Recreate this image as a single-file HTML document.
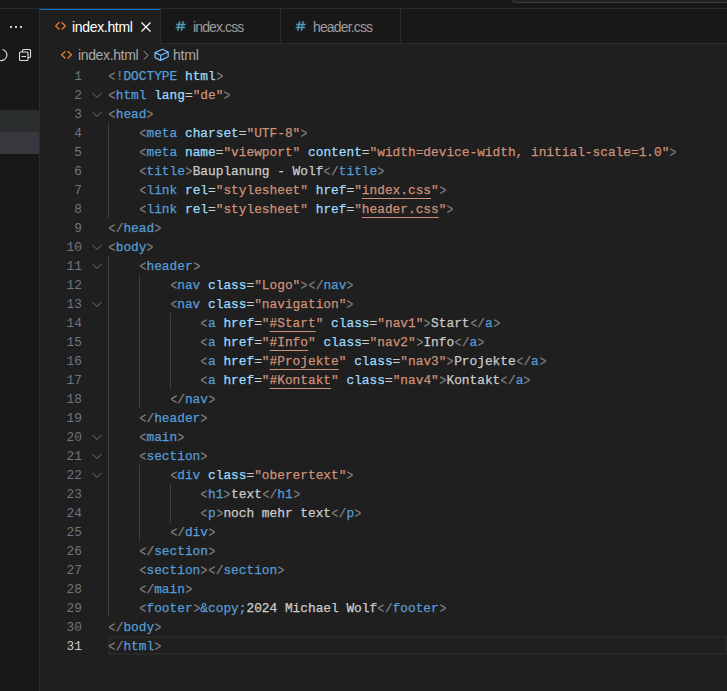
<!DOCTYPE html>
<html><head><meta charset="utf-8">
<style>
*{box-sizing:border-box}
html,body{margin:0;padding:0}
body{width:727px;height:691px;overflow:hidden;position:relative;background:#181818;font-family:"Liberation Sans",sans-serif}
.abs{position:absolute}
#title{left:0;top:0;width:727px;height:9px;background:#181818;border-bottom:1px solid #2b2b2b}
#cc{left:510px;top:-20px;width:260px;height:23px;border:1px solid #3c3c3c;border-radius:6px;background:#222222}
#side{left:0;top:9px;width:39px;height:682px;background:#181818}
#sideb{left:39px;top:9px;width:1px;height:682px;background:#2b2b2b}
#row1{left:0;top:110px;width:39px;height:22px;background:#2a2d2e}
#row2{left:0;top:132px;width:39px;height:22px;background:#37373d}
#editor{left:40px;top:44px;width:687px;height:647px;background:#1f1f1f}
#tabs{left:40px;top:9px;width:687px;height:35px;background:#181818;border-bottom:1px solid #2b2b2b}
.tab{position:absolute;top:0;height:35px;background:#181818;border-right:1px solid #2b2b2b;font-size:13px;color:#9d9d9d;border-bottom:1px solid #2b2b2b}
.tab.act{background:#1f1f1f;color:#fff;border-bottom:none;}
.tab .lbl{position:absolute;top:10px;white-space:nowrap;font-size:14px;letter-spacing:-0.33px}
.l{position:absolute;left:108px;height:19px;line-height:19px;font-family:"Liberation Mono",monospace;font-size:12.825px;white-space:pre;color:#cccccc;-webkit-text-stroke:0.25px currentColor}
.n,.n.cur{position:absolute;left:40px;width:42px;text-align:right;height:19px;line-height:19px;font-family:"Liberation Mono",monospace;font-size:12.825px;color:#6e7681}
.n.cur{color:#cccccc}
.p{color:#808080}.t{color:#569cd6}.a{color:#9cdcfe}.s{color:#ce9178}.e{color:#cccccc}.x{color:#cccccc}
.b{-webkit-text-stroke-width:0.1px;font-style:normal;display:inline-block;transform:scale(0.88,1.15);transform-origin:50% 5.1px}
.u{text-decoration:underline;text-underline-offset:4px;text-decoration-thickness:1px}
.f{position:absolute;left:89px}
.g{position:absolute;width:1px;background:#404040}
#curline{left:108px;top:636px;width:619px;height:19px;border:2px solid #282828}
#bc{left:40px;top:44px;height:22px;width:687px;font-size:13px;color:#a9a9a9}
</style></head><body>
<div id="title" class="abs"></div>
<div id="cc" class="abs"></div>
<div id="side" class="abs"></div>
<div id="row1" class="abs"></div>
<div id="row2" class="abs"></div>
<div id="sideb" class="abs"></div>
<!-- sidebar icons -->
<svg class="abs" style="left:0;top:0" width="40" height="70" viewBox="0 0 40 70">
<rect x="10" y="26" width="2" height="2" fill="#cccccc"/><rect x="15" y="26" width="2" height="2" fill="#cccccc"/><rect x="20" y="26" width="2" height="2" fill="#cccccc"/>
<path d="M2.5 49.5 A5.6 5.6 0 0 1 0 60.5" fill="none" stroke="#e0e0e0" stroke-width="1.1"/>
<rect x="19.5" y="52" width="8.5" height="8.5" rx="1" fill="none" stroke="#e0e0e0" stroke-width="1.1"/>
<path d="M22.5 52 V50.5 Q22.5 49.5 23.5 49.5 H29.5 Q30.5 49.5 30.5 50.5 V56.5 Q30.5 57.5 29.5 57.5 H28" fill="none" stroke="#e0e0e0" stroke-width="1.1"/>
<path d="M21.5 56.5 H26" stroke="#e0e0e0" stroke-width="1.1"/>
</svg>
<div id="tabs" class="abs">
  <div class="tab act" style="left:0;width:121px">
    <div class="abs" style="left:0;top:0;width:120px;height:1px;background:#0078d4"></div>
    <svg class="abs" style="left:14px;top:11px" width="14" height="12" viewBox="0 0 14 12"><path d="M5.4 2.3 L1.7 5.9 L5.4 9.5 M7.6 2.3 L11.3 5.9 L7.6 9.5" fill="none" stroke="#e37933" stroke-width="1.4"/></svg>
    <span class="lbl" style="left:32px">index.html</span>
    <svg class="abs" style="left:100px;top:12px" width="12" height="12" viewBox="0 0 12 12"><path d="M1.5 1.5 L10.5 10.5 M10.5 1.5 L1.5 10.5" fill="none" stroke="#ffffff" stroke-width="1.2"/></svg>
  </div>
  <div class="tab" style="left:121px;width:120px">
    <svg class="abs" style="left:11px;top:9px" width="18" height="16" viewBox="0 0 18 16"><path d="M7.6 3.2 L5.8 12.8 M11.2 3.2 L9.4 12.8 M4.2 6.5 H13.6 M3.7 9.5 H13" fill="none" stroke="#519aba" stroke-width="1.4"/></svg>
    <span class="lbl" style="left:32px;letter-spacing:-0.88px">index.css</span>
  </div>
  <div class="tab" style="left:241px;width:120px">
    <svg class="abs" style="left:11px;top:9px" width="18" height="16" viewBox="0 0 18 16"><path d="M7.6 3.2 L5.8 12.8 M11.2 3.2 L9.4 12.8 M4.2 6.5 H13.6 M3.7 9.5 H13" fill="none" stroke="#519aba" stroke-width="1.4"/></svg>
    <span class="lbl" style="left:32px;letter-spacing:-0.85px">header.css</span>
  </div>
</div>
<div id="editor" class="abs"></div>
<div id="bc" class="abs">
  <svg class="abs" style="left:20px;top:5px" width="14" height="12" viewBox="0 0 14 12"><path d="M5.4 2.2 L1.6 5.8 L5.4 9.4 M7.6 2.2 L11.4 5.8 L7.6 9.4" fill="none" stroke="#e37933" stroke-width="1.4"/></svg>
  <span class="abs" style="left:38px;top:3px;font-size:14px;letter-spacing:-0.36px">index.html</span>
  <svg class="abs" style="left:102px;top:5px" width="8" height="12" viewBox="0 0 8 12"><path d="M1.9 2.2 L6.1 6.4 L1.9 10.6" fill="none" stroke="#a9a9a9" stroke-width="1"/></svg>
  <svg class="abs" style="left:112px;top:2px" width="20" height="18" viewBox="0 0 20 18"><path d="M3 6.6 L10.4 3.3 L16.2 6.05 L16.2 10.7 L8.6 14.4 L3 11.6 Z M3 6.6 L8.7 9.3 L16.2 6.05 M8.7 9.3 L8.6 14.4" fill="none" stroke="#75beff" stroke-width="1.2" stroke-linejoin="round"/></svg>
  <span class="abs" style="left:133px;top:3px;font-size:14px;letter-spacing:-0.2px">html</span>
</div>
<div id="curline" class="abs"></div>
<div class="g" style="left:108px;top:123px;height:95px"></div><div class="g" style="left:108px;top:256px;height:361px"></div><div class="g" style="left:139px;top:275px;height:133px"></div><div class="g" style="left:139px;top:465px;height:76px"></div><div class="g" style="left:170px;top:313px;height:76px"></div><div class="g" style="left:170px;top:484px;height:38px"></div>
<div class="n" style="top:67px">1</div>
<div class="n" style="top:86px">2</div>
<div class="n" style="top:105px">3</div>
<div class="n" style="top:124px">4</div>
<div class="n" style="top:143px">5</div>
<div class="n" style="top:162px">6</div>
<div class="n" style="top:181px">7</div>
<div class="n" style="top:200px">8</div>
<div class="n" style="top:219px">9</div>
<div class="n" style="top:238px">10</div>
<div class="n" style="top:257px">11</div>
<div class="n" style="top:276px">12</div>
<div class="n" style="top:295px">13</div>
<div class="n" style="top:314px">14</div>
<div class="n" style="top:333px">15</div>
<div class="n" style="top:352px">16</div>
<div class="n" style="top:371px">17</div>
<div class="n" style="top:390px">18</div>
<div class="n" style="top:409px">19</div>
<div class="n" style="top:428px">20</div>
<div class="n" style="top:447px">21</div>
<div class="n" style="top:466px">22</div>
<div class="n" style="top:485px">23</div>
<div class="n" style="top:504px">24</div>
<div class="n" style="top:523px">25</div>
<div class="n" style="top:542px">26</div>
<div class="n" style="top:561px">27</div>
<div class="n" style="top:580px">28</div>
<div class="n" style="top:599px">29</div>
<div class="n" style="top:618px">30</div>
<div class="n cur" style="top:637px">31</div>
<svg class="f" style="top:85px" width="16" height="19" viewBox="0 0 16 19"><path d="M3.5 8 L8 12.5 L12.5 8" fill="none" stroke="#707070" stroke-width="1"/></svg><svg class="f" style="top:104px" width="16" height="19" viewBox="0 0 16 19"><path d="M3.5 8 L8 12.5 L12.5 8" fill="none" stroke="#707070" stroke-width="1"/></svg><svg class="f" style="top:237px" width="16" height="19" viewBox="0 0 16 19"><path d="M3.5 8 L8 12.5 L12.5 8" fill="none" stroke="#707070" stroke-width="1"/></svg><svg class="f" style="top:256px" width="16" height="19" viewBox="0 0 16 19"><path d="M3.5 8 L8 12.5 L12.5 8" fill="none" stroke="#707070" stroke-width="1"/></svg><svg class="f" style="top:294px" width="16" height="19" viewBox="0 0 16 19"><path d="M3.5 8 L8 12.5 L12.5 8" fill="none" stroke="#707070" stroke-width="1"/></svg><svg class="f" style="top:427px" width="16" height="19" viewBox="0 0 16 19"><path d="M3.5 8 L8 12.5 L12.5 8" fill="none" stroke="#707070" stroke-width="1"/></svg><svg class="f" style="top:446px" width="16" height="19" viewBox="0 0 16 19"><path d="M3.5 8 L8 12.5 L12.5 8" fill="none" stroke="#707070" stroke-width="1"/></svg><svg class="f" style="top:465px" width="16" height="19" viewBox="0 0 16 19"><path d="M3.5 8 L8 12.5 L12.5 8" fill="none" stroke="#707070" stroke-width="1"/></svg>
<div class="l" style="top:67px"><span class="p"><i class="b">&lt;</i>!</span><span class="t">DOCTYPE</span> <span class="a">html</span><span class="p"><i class="b">&gt;</i></span></div>
<div class="l" style="top:86px"><span class="p"><i class="b">&lt;</i></span><span class="t">html</span> <span class="a">lang</span><span class="e">=</span><span class="s">&quot;de&quot;</span><span class="p"><i class="b">&gt;</i></span></div>
<div class="l" style="top:105px"><span class="p"><i class="b">&lt;</i></span><span class="t">head</span><span class="p"><i class="b">&gt;</i></span></div>
<div class="l" style="top:124px">    <span class="p"><i class="b">&lt;</i></span><span class="t">meta</span> <span class="a">charset</span><span class="e">=</span><span class="s">&quot;UTF-8&quot;</span><span class="p"><i class="b">&gt;</i></span></div>
<div class="l" style="top:143px">    <span class="p"><i class="b">&lt;</i></span><span class="t">meta</span> <span class="a">name</span><span class="e">=</span><span class="s">&quot;viewport&quot;</span> <span class="a">content</span><span class="e">=</span><span class="s">&quot;width=device-width, initial-scale=1.0&quot;</span><span class="p"><i class="b">&gt;</i></span></div>
<div class="l" style="top:162px">    <span class="p"><i class="b">&lt;</i></span><span class="t">title</span><span class="p"><i class="b">&gt;</i></span><span class="x">Bauplanung - Wolf</span><span class="p"><i class="b">&lt;</i>/</span><span class="t">title</span><span class="p"><i class="b">&gt;</i></span></div>
<div class="l" style="top:181px">    <span class="p"><i class="b">&lt;</i></span><span class="t">link</span> <span class="a">rel</span><span class="e">=</span><span class="s">&quot;stylesheet&quot;</span> <span class="a">href</span><span class="e">=</span><span class="s">&quot;</span><span class="s u">index.css</span><span class="s">&quot;</span><span class="p"><i class="b">&gt;</i></span></div>
<div class="l" style="top:200px">    <span class="p"><i class="b">&lt;</i></span><span class="t">link</span> <span class="a">rel</span><span class="e">=</span><span class="s">&quot;stylesheet&quot;</span> <span class="a">href</span><span class="e">=</span><span class="s">&quot;</span><span class="s u">header.css</span><span class="s">&quot;</span><span class="p"><i class="b">&gt;</i></span></div>
<div class="l" style="top:219px"><span class="p"><i class="b">&lt;</i>/</span><span class="t">head</span><span class="p"><i class="b">&gt;</i></span></div>
<div class="l" style="top:238px"><span class="p"><i class="b">&lt;</i></span><span class="t">body</span><span class="p"><i class="b">&gt;</i></span></div>
<div class="l" style="top:257px">    <span class="p"><i class="b">&lt;</i></span><span class="t">header</span><span class="p"><i class="b">&gt;</i></span></div>
<div class="l" style="top:276px">        <span class="p"><i class="b">&lt;</i></span><span class="t">nav</span> <span class="a">class</span><span class="e">=</span><span class="s">&quot;Logo&quot;</span><span class="p"><i class="b">&gt;</i></span><span class="p"><i class="b">&lt;</i>/</span><span class="t">nav</span><span class="p"><i class="b">&gt;</i></span></div>
<div class="l" style="top:295px">        <span class="p"><i class="b">&lt;</i></span><span class="t">nav</span> <span class="a">class</span><span class="e">=</span><span class="s">&quot;navigation&quot;</span><span class="p"><i class="b">&gt;</i></span></div>
<div class="l" style="top:314px">            <span class="p"><i class="b">&lt;</i></span><span class="t">a</span> <span class="a">href</span><span class="e">=</span><span class="s">&quot;</span><span class="s u">#Start</span><span class="s">&quot;</span> <span class="a">class</span><span class="e">=</span><span class="s">&quot;nav1&quot;</span><span class="p"><i class="b">&gt;</i></span><span class="x">Start</span><span class="p"><i class="b">&lt;</i>/</span><span class="t">a</span><span class="p"><i class="b">&gt;</i></span></div>
<div class="l" style="top:333px">            <span class="p"><i class="b">&lt;</i></span><span class="t">a</span> <span class="a">href</span><span class="e">=</span><span class="s">&quot;</span><span class="s u">#Info</span><span class="s">&quot;</span> <span class="a">class</span><span class="e">=</span><span class="s">&quot;nav2&quot;</span><span class="p"><i class="b">&gt;</i></span><span class="x">Info</span><span class="p"><i class="b">&lt;</i>/</span><span class="t">a</span><span class="p"><i class="b">&gt;</i></span></div>
<div class="l" style="top:352px">            <span class="p"><i class="b">&lt;</i></span><span class="t">a</span> <span class="a">href</span><span class="e">=</span><span class="s">&quot;</span><span class="s u">#Projekte</span><span class="s">&quot;</span> <span class="a">class</span><span class="e">=</span><span class="s">&quot;nav3&quot;</span><span class="p"><i class="b">&gt;</i></span><span class="x">Projekte</span><span class="p"><i class="b">&lt;</i>/</span><span class="t">a</span><span class="p"><i class="b">&gt;</i></span></div>
<div class="l" style="top:371px">            <span class="p"><i class="b">&lt;</i></span><span class="t">a</span> <span class="a">href</span><span class="e">=</span><span class="s">&quot;</span><span class="s u">#Kontakt</span><span class="s">&quot;</span> <span class="a">class</span><span class="e">=</span><span class="s">&quot;nav4&quot;</span><span class="p"><i class="b">&gt;</i></span><span class="x">Kontakt</span><span class="p"><i class="b">&lt;</i>/</span><span class="t">a</span><span class="p"><i class="b">&gt;</i></span></div>
<div class="l" style="top:390px">        <span class="p"><i class="b">&lt;</i>/</span><span class="t">nav</span><span class="p"><i class="b">&gt;</i></span></div>
<div class="l" style="top:409px">    <span class="p"><i class="b">&lt;</i>/</span><span class="t">header</span><span class="p"><i class="b">&gt;</i></span></div>
<div class="l" style="top:428px">    <span class="p"><i class="b">&lt;</i></span><span class="t">main</span><span class="p"><i class="b">&gt;</i></span></div>
<div class="l" style="top:447px">    <span class="p"><i class="b">&lt;</i></span><span class="t">section</span><span class="p"><i class="b">&gt;</i></span></div>
<div class="l" style="top:466px">        <span class="p"><i class="b">&lt;</i></span><span class="t">div</span> <span class="a">class</span><span class="e">=</span><span class="s">&quot;oberertext&quot;</span><span class="p"><i class="b">&gt;</i></span></div>
<div class="l" style="top:485px">            <span class="p"><i class="b">&lt;</i></span><span class="t">h1</span><span class="p"><i class="b">&gt;</i></span><span class="x">text</span><span class="p"><i class="b">&lt;</i>/</span><span class="t">h1</span><span class="p"><i class="b">&gt;</i></span></div>
<div class="l" style="top:504px">            <span class="p"><i class="b">&lt;</i></span><span class="t">p</span><span class="p"><i class="b">&gt;</i></span><span class="x">noch mehr text</span><span class="p"><i class="b">&lt;</i>/</span><span class="t">p</span><span class="p"><i class="b">&gt;</i></span></div>
<div class="l" style="top:523px">        <span class="p"><i class="b">&lt;</i>/</span><span class="t">div</span><span class="p"><i class="b">&gt;</i></span></div>
<div class="l" style="top:542px">    <span class="p"><i class="b">&lt;</i>/</span><span class="t">section</span><span class="p"><i class="b">&gt;</i></span></div>
<div class="l" style="top:561px">    <span class="p"><i class="b">&lt;</i></span><span class="t">section</span><span class="p"><i class="b">&gt;</i></span><span class="p"><i class="b">&lt;</i>/</span><span class="t">section</span><span class="p"><i class="b">&gt;</i></span></div>
<div class="l" style="top:580px">    <span class="p"><i class="b">&lt;</i>/</span><span class="t">main</span><span class="p"><i class="b">&gt;</i></span></div>
<div class="l" style="top:599px">    <span class="p"><i class="b">&lt;</i></span><span class="t">footer</span><span class="p"><i class="b">&gt;</i></span><span class="t">&amp;copy;</span><span class="x">2024 Michael Wolf</span><span class="p"><i class="b">&lt;</i>/</span><span class="t">footer</span><span class="p"><i class="b">&gt;</i></span></div>
<div class="l" style="top:618px"><span class="p"><i class="b">&lt;</i>/</span><span class="t">body</span><span class="p"><i class="b">&gt;</i></span></div>
<div class="l" style="top:637px"><span class="p"><i class="b">&lt;</i>/</span><span class="t">html</span><span class="p"><i class="b">&gt;</i></span></div>
</body></html>
